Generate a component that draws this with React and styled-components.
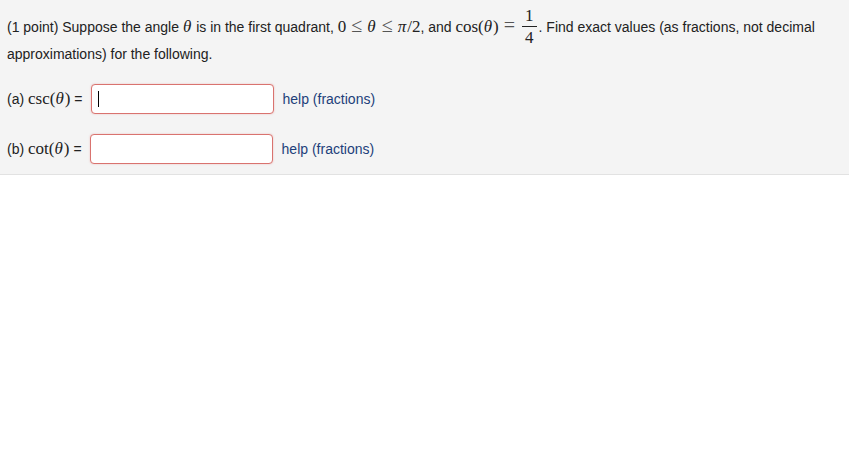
import React from 'react';
import styled, { createGlobalStyle } from 'styled-components';

const GlobalStyle = createGlobalStyle`
  html, body {
    margin: 0;
    padding: 0;
    background: #ffffff;
  }
  body {
    font-family: "Liberation Sans", Arial, sans-serif;
    font-size: 14px;
    color: #222222;
  }
`;

const Panel = styled.div`
  background: #f4f4f4;
  border-bottom: 1px solid #e2e2e2;
  padding: 13px 7px 10px;
`;

const Para = styled.p`
  margin: 0 0 16px;
  line-height: 27px;
`;

const M = styled.span`
  font-family: "Liberation Serif", "Times New Roman", serif;
  font-size: 17px;
  white-space: nowrap;
  i {
    font-style: italic;
    padding-right: 1px;
  }
`;

const Rel = styled(M)`
  color: #555;
  font-size: 20px;
  line-height: 1;
  margin: 0 ${(p) => p.$gap || 5}px;
`;

const Frac = styled.span`
  display: inline-flex;
  flex-direction: column;
  align-items: center;
  vertical-align: middle;
  font-family: "Liberation Serif", "Times New Roman", serif;
  font-size: 17px;
  line-height: 14px;
  margin: -5px 2px -5px 2px;
  position: relative;
  top: -1px;
`;

const Num = styled.span`
  padding: 0 3px 3px;
  border-bottom: 1px solid #222;
`;

const Den = styled.span`
  padding: 4px 3px 0;
`;

const Row = styled.div`
  display: flex;
  align-items: center;
  height: 30px;
  margin-bottom: 20px;
  &:last-child {
    margin-bottom: 0;
  }
`;

const Label = styled.span`
  white-space: pre;
`;

const AnswerInput = styled.input`
  box-sizing: border-box;
  width: 183px;
  height: 30px;
  margin: 0;
  border: 1px solid #d9736f;
  border-radius: 4px;
  background: #fff;
  box-shadow: 0 0 2px rgba(217, 83, 79, 0.35);
  padding: 4px 8px;
  font-family: "Liberation Sans", Arial, sans-serif;
  font-size: 14px;
  outline: none;
`;

const InputWrap = styled.span`
  position: relative;
  display: inline-flex;
  margin-left: 8px;
`;

const Caret = styled.span`
  position: absolute;
  left: 7px;
  top: 7px;
  width: 1px;
  height: 16px;
  background: #000;
`;

const Help = styled.a`
  margin-left: 9px;
  color: #1d3f7a;
  text-decoration: none;
`;

const Answer = ({ label, fn, caret }) => (
  <Row>
    <Label>{label} </Label>
    <M>
      {fn}(<i>θ</i>)
    </M>
    <Label> =</Label>
    <InputWrap>
      <AnswerInput />
      {caret && <Caret />}
    </InputWrap>
    <Help href="#">help (fractions)</Help>
  </Row>
);

export default function App() {
  return (
    <>
      <GlobalStyle />
      <Panel>
        <Para>
          (1 point) Suppose the angle <M><i>θ</i></M> is in the first quadrant,{' '}
          <M>0</M>
          <Rel>≤</Rel>
          <M><i>θ</i></M>
          <Rel>≤</Rel>
          <M><i>π</i>/2</M>, and <M>cos(<i>θ</i>)</M>
          <Rel>=</Rel>
          <Frac>
            <Num>1</Num>
            <Den>4</Den>
          </Frac>
          . Find exact values (as fractions, not decimal approximations) for the following.
        </Para>
        <Answer label="(a)" fn="csc" caret />
        <Answer label="(b)" fn="cot" />
      </Panel>
    </>
  );
}
